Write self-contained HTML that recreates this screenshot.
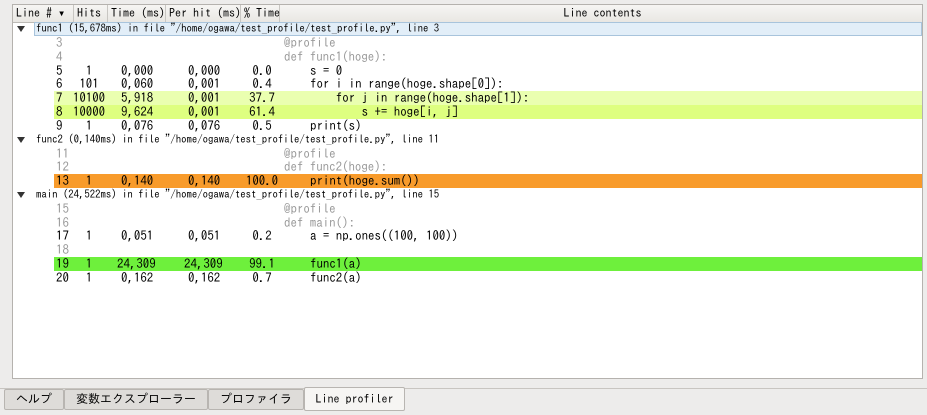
<!DOCTYPE html>
<html><head><meta charset="utf-8"><style>
body{margin:0;width:927px;height:415px;background:#edeceb;position:relative;overflow:hidden;font-family:"IPAGothic","Liberation Mono",monospace;font-size:10.75px;color:#000}
#tree{position:absolute;left:12px;top:4px;width:909px;height:373px;background:#fff;border:1px solid #b5b2ae}
#hdr{position:absolute;left:0;top:0;width:909px;height:17px;background:linear-gradient(#f6f5f3,#e9e7e3);border-bottom:1px solid #bcbab6;font-size:12px}
#hdr div{position:absolute;top:0;height:17px;line-height:17px;border-right:1px solid #c8c6c2;box-sizing:border-box;padding-left:3px;white-space:nowrap}
.r{position:absolute;left:0;width:909px;height:14px;line-height:14px;white-space:pre}
.r span{position:absolute;font-size:12.9px}
.r span.h{font-size:10.75px}
.r span.c{transform:translateX(-50%)}
.g{color:#9a9a9a}
.tri{position:absolute;left:4px;top:4px;width:0;height:0;border-left:4px solid transparent;border-right:4px solid transparent;border-top:6px solid #333}
.hl{position:absolute;left:41px;width:868px;height:14px}
#tabs{position:absolute;left:3px;top:389px;height:21px}
.tab{position:absolute;top:0;height:19px;line-height:19px;background:#dedcd9;border:1px solid #b8b5b1;border-radius:2px;text-align:center;font-family:"Liberation Sans","IPAGothic",sans-serif;font-size:12px}
</style></head><body>
<div id="tree">
<div id="hdr">
<div style="left:0;width:61px">Line # ▾</div>
<div style="left:61px;width:34px">Hits</div>
<div style="left:95px;width:58px">Time (ms)</div>
<div style="left:153px;width:75px">Per hit (ms)</div>
<div style="left:228px;width:39px">% Time</div>
<div style="left:267px;width:642px;text-align:center;border-right:none">Line contents</div>
</div>

<div class="r" style="top:17px"><i class="tri"></i><div style="position:absolute;left:21px;width:886px;height:12px;background:#e2eef8;border:1px solid #a8c4dc"></div><span class="h" style="left:23px">func1 (15,678ms) in file "/home/ogawa/test_profile/test_profile.py", line 3</span></div>
<div class="r g" style="top:31px"><span style="left:43px">3</span><span style="left:271px">@profile</span></div>
<div class="r g" style="top:45px"><span style="left:43px">4</span><span style="left:271px">def func1(hoge):</span></div>
<div class="r" style="top:59px"><span style="left:43px">5</span><span class="c" style="left:76px">1</span><span style="left:108px">0,000</span><span style="left:175px">0,000</span><span class="c" style="left:249px">0.0</span><span style="left:297px">s = 0</span></div>
<div class="r" style="top:72px"><span style="left:43px">6</span><span class="c" style="left:76px">101</span><span style="left:108px">0,060</span><span style="left:175px">0,001</span><span class="c" style="left:249px">0.4</span><span style="left:297px">for i in range(hoge.shape[0]):</span></div>
<div class="r" style="top:86px"><div class="hl" style="background:#eaffb0"></div><span style="left:43px">7</span><span class="c" style="left:76px">10100</span><span style="left:108px">5,918</span><span style="left:175px">0,001</span><span class="c" style="left:249px">37.7</span><span style="left:297px">    for j in range(hoge.shape[1]):</span></div>
<div class="r" style="top:100px"><div class="hl" style="background:#deff80"></div><span style="left:43px">8</span><span class="c" style="left:76px">10000</span><span style="left:108px">9,624</span><span style="left:175px">0,001</span><span class="c" style="left:249px">61.4</span><span style="left:297px">        s += hoge[i, j]</span></div>
<div class="r" style="top:114px"><span style="left:43px">9</span><span class="c" style="left:76px">1</span><span style="left:108px">0,076</span><span style="left:175px">0,076</span><span class="c" style="left:249px">0.5</span><span style="left:297px">print(s)</span></div>
<div class="r" style="top:128px"><i class="tri"></i><span class="h" style="left:23px">func2 (0,140ms) in file "/home/ogawa/test_profile/test_profile.py", line 11</span></div>
<div class="r g" style="top:142px"><span style="left:43px">11</span><span style="left:271px">@profile</span></div>
<div class="r g" style="top:155px"><span style="left:43px">12</span><span style="left:271px">def func2(hoge):</span></div>
<div class="r" style="top:169px"><div class="hl" style="background:#f89b2b"></div><span style="left:43px">13</span><span class="c" style="left:76px">1</span><span style="left:108px">0,140</span><span style="left:175px">0,140</span><span class="c" style="left:249px">100.0</span><span style="left:297px">print(hoge.sum())</span></div>
<div class="r" style="top:183px"><i class="tri"></i><span class="h" style="left:23px">main (24,522ms) in file "/home/ogawa/test_profile/test_profile.py", line 15</span></div>
<div class="r g" style="top:197px"><span style="left:43px">15</span><span style="left:271px">@profile</span></div>
<div class="r g" style="top:211px"><span style="left:43px">16</span><span style="left:271px">def main():</span></div>
<div class="r" style="top:224px"><span style="left:43px">17</span><span class="c" style="left:76px">1</span><span style="left:108px">0,051</span><span style="left:175px">0,051</span><span class="c" style="left:249px">0.2</span><span style="left:297px">a = np.ones((100, 100))</span></div>
<div class="r g" style="top:238px"><span style="left:43px">18</span></div>
<div class="r" style="top:252px"><div class="hl" style="background:#6ef03c"></div><span style="left:43px">19</span><span class="c" style="left:76px">1</span><span style="left:104px">24,309</span><span style="left:171px">24,309</span><span class="c" style="left:249px">99.1</span><span style="left:297px">func1(a)</span></div>
<div class="r" style="top:266px"><span style="left:43px">20</span><span class="c" style="left:76px">1</span><span style="left:108px">0,162</span><span style="left:175px">0,162</span><span class="c" style="left:249px">0.7</span><span style="left:297px">func2(a)</span></div>
</div>
<div style="position:absolute;left:0;top:388px;width:927px;border-top:1px solid #c8c5c1"></div>
<div id="tabs">
<div class="tab" style="left:1px;width:58px">ヘルプ</div>
<div class="tab" style="left:61px;width:142px">変数エクスプローラー</div>
<div class="tab" style="left:205px;width:94px">プロファイラ</div>
<div class="tab" style="left:301px;top:-2px;height:22px;line-height:22px;width:99px;background:#f6f5f3;border-bottom:1px solid #b8b5b1;font-family:'IPAGothic',monospace;font-size:12px">Line profiler</div>
</div>
</body></html>
